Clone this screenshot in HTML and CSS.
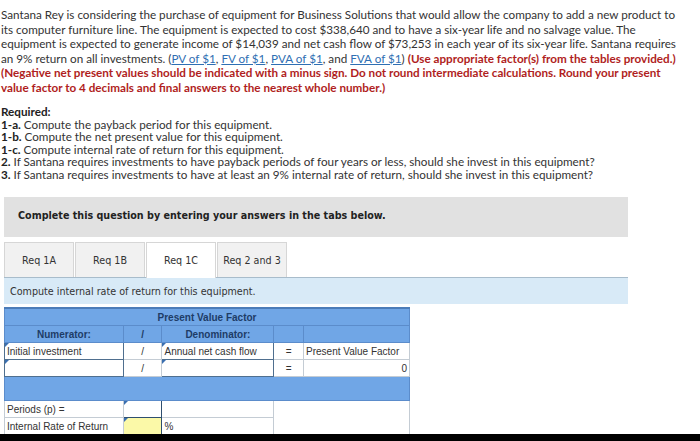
FILE: index.html
```html
<!DOCTYPE html>
<html lang="en">
<head>
<meta charset="UTF-8">
<meta name="viewport" content="width=device-width, initial-scale=1.0">
<title>Santana Rey - Internal Rate of Return</title>
<link rel="stylesheet" href="styles.css">
</head>
<body>

<div class="question">
  <p class="intro">
    Santana Rey is considering the purchase of equipment for Business Solutions that would allow the company to add a new product to<br>
    its computer furniture line. The equipment is expected to cost $338,640 and to have a six-year life and no salvage value. The<br>
    equipment is expected to generate income of $14,039 and net cash flow of $73,253 in each year of its six-year life. Santana requires<br>
    an 9% return on all investments. (<a href="#">PV of $1</a>, <a href="#">FV of $1</a>, <a href="#">PVA of $1</a>, and <a href="#">FVA of $1</a>)
    <b class="warn">(Use appropriate factor(s) from the tables provided.)<br>
    (Negative net present values should be indicated with a minus sign. Do not round intermediate calculations. Round your present<br>
    value factor to 4 decimals and final answers to the nearest whole number.)</b>
  </p>

  <div class="required">
    <b>Required:</b><br>
    <b>1-a.</b> Compute the payback period for this equipment.<br>
    <b>1-b.</b> Compute the net present value for this equipment.<br>
    <b>1-c.</b> Compute internal rate of return for this equipment.<br>
    <b>2.</b> If Santana requires investments to have payback periods of four years or less, should she invest in this equipment?<br>
    <b>3.</b> If Santana requires investments to have at least an 9% internal rate of return, should she invest in this equipment?
  </div>
</div>

<div class="answer">
  <div class="banner">Complete this question by entering your answers in the tabs below.</div>

  <div class="tabs">
    <div class="tab">Req 1A</div>
    <div class="tab">Req 1B</div>
    <div class="tab active">Req 1C</div>
    <div class="tab">Req 2 and 3</div>
  </div>
  <div class="prompt">Compute internal rate of return for this equipment.</div>

  <table class="pvf">
    <colgroup>
      <col class="c-num"><col class="c-div"><col class="c-den"><col class="c-eq"><col class="c-res">
    </colgroup>
    <tr class="head">
      <th colspan="5">Present Value Factor</th>
    </tr>
    <tr class="head">
      <th>Numerator:</th>
      <th>/</th>
      <th>Denominator:</th>
      <th></th>
      <th></th>
    </tr>
    <tr>
      <td class="entry">Initial investment</td>
      <td class="op">/</td>
      <td class="entry">Annual net cash flow</td>
      <td class="op">=</td>
      <td>Present Value Factor</td>
    </tr>
    <tr>
      <td class="entry"></td>
      <td class="op">/</td>
      <td class="entry"></td>
      <td class="op">=</td>
      <td class="num">0</td>
    </tr>
    <tr class="gap">
      <td colspan="5"></td>
    </tr>
    <tr>
      <td>Periods (p) =</td>
      <td class="entry box"></td>
      <td></td>
      <td colspan="2" rowspan="2"></td>
    </tr>
    <tr>
      <td>Internal Rate of Return</td>
      <td class="entry box yellow"></td>
      <td>%</td>
    </tr>
  </table>
</div>

<div class="footer"></div>

</body>
</html>
```

FILE: styles.css
```css
body {
  margin: 0;
  background: #fff;
  color: #333;
}

.question {
  padding: 7px 0 0 1px;
  font-family: Lato, "Liberation Sans", sans-serif;
  font-size: 11.7px;
  line-height: 14.5px;
  color: #333;
  white-space: nowrap;
}

.intro {
  margin: 0;
}

.intro a {
  color: #2f6fb3;
  text-decoration: underline;
}

.warn {
  color: #b01e22;
}

.required {
  margin-top: 11px;
  line-height: 12.5px;
}

.required b {
  color: #222;
}

.answer {
  margin: 17px 0 0 4px;
  width: 624px;
  font-family: "DejaVu Sans", Verdana, sans-serif;
}

.banner {
  background: #e1e1e1;
  height: 40px;
  line-height: 38px;
  padding-left: 14px;
  font-size: 9.6px;
  font-weight: bold;
  color: #222;
}

.tabs {
  display: flex;
  margin-top: 5px;
  gap: 1px;
}

.tab {
  width: 68px;
  height: 34px;
  line-height: 36px;
  text-align: center;
  font-size: 9.6px;
  color: #333;
  background: #f1f1f1;
  border: 1px solid #d6d6d6;
  border-bottom: none;
}

.tab.active {
  background: #fff;
  height: 35px;
  margin-bottom: -1px;
  position: relative;
}

.prompt {
  background: #d8eaf7;
  border-top: 1px solid #a8bccb;
  height: 26px;
  line-height: 27px;
  padding-left: 6px;
  font-size: 9.6px;
  color: #333;
}

.pvf {
  margin-top: 3px;
  width: 406px;
  border-collapse: collapse;
  font-family: "Liberation Sans", Arial, sans-serif;
  font-size: 10px;
  color: #333;
  border-right: 1px solid #9aa8b6;
}

.c-num { width: 119px; }
.c-div { width: 39px; }
.c-den { width: 112px; }
.c-eq { width: 30px; }
.c-res { width: 106px; }

.pvf th,
.pvf td {
  height: 16px;
  padding: 0 2px;
  border: 1px solid #c4ccd4;
  white-space: nowrap;
}

.pvf .head th {
  background: #70a6e6;
  border-color: #5b8ccb;
  color: #1e3c66;
  font-weight: bold;
  text-align: center;
}

.pvf .head:first-child th {
  border-top: 2px solid #4c7cb8;
}

.pvf td.entry {
  border: 1px solid #4f6f8f;
  position: relative;
}

/* small corner marker on editable cells */
.pvf td.entry::before {
  content: "";
  position: absolute;
  left: 0;
  top: 0;
  border-top: 4px solid #3a6fb0;
  border-right: 4px solid transparent;
}

.pvf td.box {
  border: 1px solid #2f4f6f;
}

.pvf td.yellow {
  background: #fbf9a8;
}

.pvf td.op {
  text-align: center;
}

.pvf td.num {
  text-align: right;
}

.pvf .gap td {
  height: 23px;
  background: #70a6e6;
  border-color: #5b8ccb;
}

.footer {
  position: absolute;
  left: 0;
  right: 0;
  top: 434px;
  height: 7px;
  background: #000;
}
```
